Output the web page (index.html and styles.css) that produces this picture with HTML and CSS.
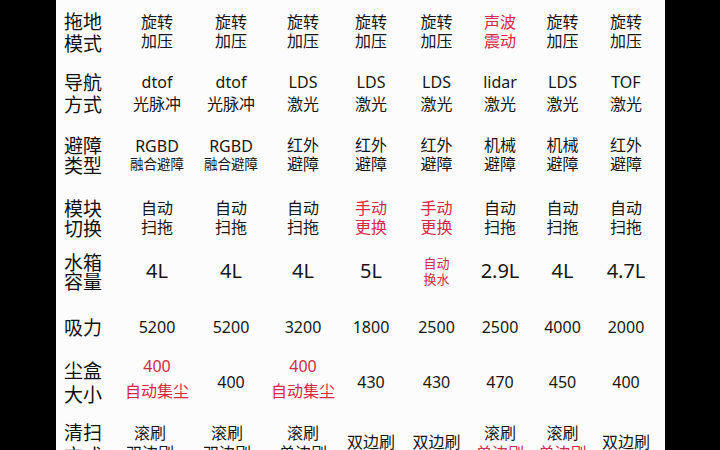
FILE: index.html
```html
<!DOCTYPE html>
<html lang="zh-CN">
<head>
<meta charset="utf-8">
<title>扫地机器人参数对比</title>
<link rel="stylesheet" href="styles.css">
</head>
<body>
<div class="page">
  <div class="sheet">
    <!-- row 1 -->
    <div class="label lh22"><span>拖地</span><span>模式</span></div>
    <div class="cell lh19"><span>旋转</span><span>加压</span></div>
    <div class="cell lh19"><span>旋转</span><span>加压</span></div>
    <div class="cell lh19"><span>旋转</span><span>加压</span></div>
    <div class="cell lh19"><span>旋转</span><span>加压</span></div>
    <div class="cell lh19"><span>旋转</span><span>加压</span></div>
    <div class="cell lh19 red"><span>声波</span><span>震动</span></div>
    <div class="cell lh19"><span>旋转</span><span>加压</span></div>
    <div class="cell lh19"><span>旋转</span><span>加压</span></div>

    <!-- row 2 -->
    <div class="label lh22"><span>导航</span><span>方式</span></div>
    <div class="cell lh22"><span>dtof</span><span>光脉冲</span></div>
    <div class="cell lh22"><span>dtof</span><span>光脉冲</span></div>
    <div class="cell lh22"><span>LDS</span><span>激光</span></div>
    <div class="cell lh22"><span>LDS</span><span>激光</span></div>
    <div class="cell lh22"><span>LDS</span><span>激光</span></div>
    <div class="cell lh22"><span>lidar</span><span>激光</span></div>
    <div class="cell lh22"><span>LDS</span><span>激光</span></div>
    <div class="cell lh22"><span>TOF</span><span>激光</span></div>

    <!-- row 3 -->
    <div class="label lh20"><span>避障</span><span>类型</span></div>
    <div class="cell lh18"><span>RGBD</span><span class="sm">融合避障</span></div>
    <div class="cell lh18"><span>RGBD</span><span class="sm">融合避障</span></div>
    <div class="cell lh19"><span>红外</span><span>避障</span></div>
    <div class="cell lh19"><span>红外</span><span>避障</span></div>
    <div class="cell lh19"><span>红外</span><span>避障</span></div>
    <div class="cell lh19"><span>机械</span><span>避障</span></div>
    <div class="cell lh19"><span>机械</span><span>避障</span></div>
    <div class="cell lh19"><span>红外</span><span>避障</span></div>

    <!-- row 4 -->
    <div class="label lh20"><span>模块</span><span>切换</span></div>
    <div class="cell lh19"><span>自动</span><span>扫拖</span></div>
    <div class="cell lh19"><span>自动</span><span>扫拖</span></div>
    <div class="cell lh19"><span>自动</span><span>扫拖</span></div>
    <div class="cell lh19 red"><span>手动</span><span>更换</span></div>
    <div class="cell lh19 red"><span>手动</span><span>更换</span></div>
    <div class="cell lh19"><span>自动</span><span>扫拖</span></div>
    <div class="cell lh19"><span>自动</span><span>扫拖</span></div>
    <div class="cell lh19"><span>自动</span><span>扫拖</span></div>

    <!-- row 5 -->
    <div class="label lh19"><span>水箱</span><span>容量</span></div>
    <div class="cell big"><span>4L</span></div>
    <div class="cell big"><span>4L</span></div>
    <div class="cell big"><span>4L</span></div>
    <div class="cell big"><span>5L</span></div>
    <div class="cell tiny red"><span>自动</span><span>换水</span></div>
    <div class="cell big"><span>2.9L</span></div>
    <div class="cell big"><span>4L</span></div>
    <div class="cell big"><span>4.7L</span></div>

    <!-- row 6 -->
    <div class="label"><span>吸力</span></div>
    <div class="cell num"><span>5200</span></div>
    <div class="cell num"><span>5200</span></div>
    <div class="cell num"><span>3200</span></div>
    <div class="cell num"><span>1800</span></div>
    <div class="cell num"><span>2500</span></div>
    <div class="cell num"><span>2500</span></div>
    <div class="cell num"><span>4000</span></div>
    <div class="cell num"><span>2000</span></div>

    <!-- row 7 -->
    <div class="label lh24"><span>尘盒</span><span>大小</span></div>
    <div class="cell lh25 red up"><span>400</span><span>自动集尘</span></div>
    <div class="cell num"><span>400</span></div>
    <div class="cell lh25 red up"><span>400</span><span>自动集尘</span></div>
    <div class="cell num"><span>430</span></div>
    <div class="cell num"><span>430</span></div>
    <div class="cell num"><span>470</span></div>
    <div class="cell num"><span>450</span></div>
    <div class="cell num"><span>400</span></div>

    <!-- row 8 -->
    <div class="label lh23"><span>清扫</span><span>方式</span></div>
    <div class="cell lh20 shiftl"><span>滚刷</span><span>双边刷</span></div>
    <div class="cell lh20 shiftl2"><span>滚刷</span><span>双边刷</span></div>
    <div class="cell lh20"><span>滚刷</span><span>单边刷</span></div>
    <div class="cell lh20 down"><span>双边刷</span></div>
    <div class="cell lh20 down"><span>双边刷</span></div>
    <div class="cell lh20"><span>滚刷</span><span class="red">单边刷</span></div>
    <div class="cell lh20"><span>滚刷</span><span class="red">单边刷</span></div>
    <div class="cell lh20 down"><span>双边刷</span></div>
  </div>
</div>
</body>
</html>
```

FILE: styles.css
```css
html, body {
  margin: 0;
  padding: 0;
  background: #000;
  width: 720px;
  height: 450px;
  overflow: hidden;
}

.page {
  margin-left: 56px;
  width: 609px;
  height: 450px;
  background: #fcfcfc;
  overflow: hidden;
  font-family: "Noto Sans", "Noto Sans CJK SC", sans-serif;
  color: #161616;
}

.sheet {
  display: grid;
  grid-template-columns: 64px 74px 74px 70px 66px 65px 62px 63px 64px;
  grid-template-rows: 64px 58px 66px 60px 46px 66px 44px 78px;
}

.label,
.cell {
  display: flex;
  flex-direction: column;
  justify-content: center;
  align-items: center;
  white-space: nowrap;
}

.label {
  align-items: flex-start;
  padding-left: 8px;
  font-family: "Noto Sans CJK SC", sans-serif;
  font-size: 19px;
  line-height: 22px;
  color: #111;
}

.cell {
  font-size: 16px;
  line-height: 20px;
}

.cell span {
  display: block;
}

.lh18 { line-height: 18px; }
.lh19 { line-height: 19px; }
.lh20 { line-height: 20px; }
.lh22 { line-height: 22px; }
.lh23 { line-height: 23px; }
.lh24 { line-height: 24px; }
.lh25 { line-height: 25px; }

.sm {
  font-size: 13.5px;
}

.big {
  font-size: 20px;
  line-height: 24px;
}

.num {
  font-size: 16px;
  line-height: 20px;
}

.tiny {
  font-size: 13px;
  line-height: 16px;
}

.red {
  color: #d42a46;
}

.up {
  padding-bottom: 6px;
}

.down {
  padding-bottom: 2px;
}

.shiftl {
  padding-right: 14px;
}

.shiftl2 {
  padding-right: 8px;
}
```
